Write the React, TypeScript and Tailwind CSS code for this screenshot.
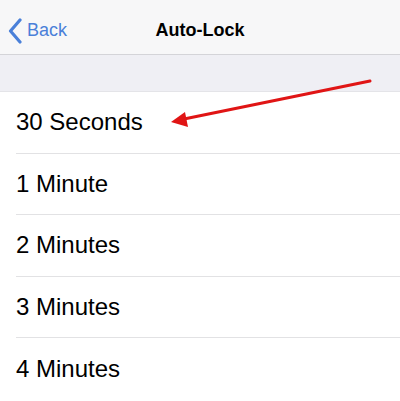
import React from 'react';

const options = ['30 Seconds', '1 Minute', '2 Minutes', '3 Minutes', '4 Minutes'];

function Chevron() {
  return (
    <svg width="14" height="26" viewBox="0 0 14 26" fill="none">
      <path
        d="M12 2 L2.5 13 L12 24"
        stroke="#4a80d9"
        strokeWidth="3.2"
        strokeLinecap="round"
        strokeLinejoin="round"
      />
    </svg>
  );
}

export default function App() {
  return (
    <div
      className="relative w-[400px] h-[401px] overflow-hidden bg-white"
      style={{ fontFamily: '"Liberation Sans", Arial, sans-serif' }}
    >
      {/* nav bar */}
      <nav className="relative h-[55px] pt-[7px] bg-[#f7f7f8] border-b border-[#d4d4d8] flex items-center">
        <div className="flex items-center pl-[8px] gap-[5px] text-[18px] text-[#4a80d9]">
          <Chevron />
          <span>Back</span>
        </div>
        <h1 className="absolute left-0 right-0 text-center text-[18px] font-bold text-black pointer-events-none">
          Auto-Lock
        </h1>
      </nav>

      <div className="h-[37px] bg-[#efeff4] border-b border-[#e4e4e8]" />

      <ul className="pl-4">
        {options.map((opt, i) => (
          <li
            key={opt}
            className={`h-[61.5px] flex items-center text-[24px] text-black ${
              i < options.length - 1 ? 'border-b border-[#e2e2e4]' : ''
            }`}
          >
            {opt}
          </li>
        ))}
      </ul>

      {/* red pointer arrow */}
      <svg
        className="absolute left-0 top-0 pointer-events-none"
        width="400"
        height="401"
        viewBox="0 0 400 401"
      >
        <line x1="370" y1="81" x2="184" y2="119" stroke="#e01515" strokeWidth="3" strokeLinecap="round" />
        <polygon points="171,122 185,112 188,127" fill="#e01515" />
      </svg>
    </div>
  );
}
